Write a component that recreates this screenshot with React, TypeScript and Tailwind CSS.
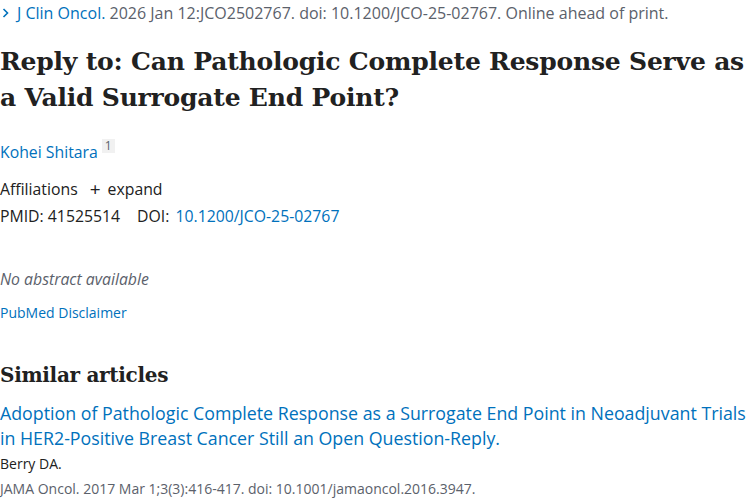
import React from "react";

const sans = "font-['Open_Sans',sans-serif]";
const serif = "font-['DejaVu_Serif',serif]";

export default function App() {
  return (
    <div className={`w-[750px] h-[500px] overflow-hidden bg-white ${sans} text-[#212121]`}>
      <div className="flex items-center h-[26px] text-[16px] text-[#5b616b] whitespace-nowrap">
        <svg width="10" height="12" viewBox="0 0 10 12" className="ml-[1px] mr-[6px]">
          <path d="M2.5 2 L6.5 6 L2.5 10" stroke="#0071bc" strokeWidth="1.6" fill="none" />
        </svg>
        <span className="text-[#0071bc]">J Clin Oncol.</span>
        <span>&nbsp;2026 Jan 12:JCO2502767. doi: 10.1200/JCO-25-02767. Online ahead of print.</span>
      </div>
      <h1 className={`${serif} font-bold text-[25px] leading-[36px] mt-[18px] tracking-[-0.2px]`}>
        Reply to: Can Pathologic Complete Response Serve as a Valid Surrogate End Point?
      </h1>
      <div className="mt-[24px] flex items-center h-[24px] text-[15.8px] leading-[24px]">
        <span className="text-[#0071bc]">Kohei Shitara</span>
        <span className="ml-[4px] self-start mt-[-1px] bg-[#f1f1f1] text-[12px] leading-[14px] px-[3px] text-[#5b616b]">1</span>
      </div>
      <div className="mt-[13px] flex items-center h-[24px] text-[15.8px] leading-[24px]">
        <span>Affiliations</span>
        <span className="ml-[12px] text-[19px] leading-none">+</span>
        <span className="ml-[7px]">expand</span>
      </div>
      <div className="mt-[3px] flex items-center h-[24px] text-[15.8px] leading-[24px] whitespace-nowrap">
        <span>PMID: 41525514</span>
        <span className="ml-[17px]">DOI:</span>
        <span className="ml-[6px] text-[#0071bc]">10.1200/JCO-25-02767</span>
      </div>
      <div className="mt-[39px] h-[24px] leading-[24px] italic text-[15.8px] text-[#5b616b]">No abstract available</div>
      <div className="mt-[12px] h-[20px] leading-[20px] text-[14px] text-[#0071bc]">PubMed Disclaimer</div>
      <h2 className={`${serif} font-bold text-[20px] leading-[30px] mt-[37px] tracking-[-0.3px]`}>Similar articles</h2>
      <div className="mt-[11px] text-[17.8px] leading-[25px] text-[#0071bc]">
        Adoption of Pathologic Complete Response as a Surrogate End Point in Neoadjuvant Trials in HER2-Positive Breast Cancer Still an Open Question-Reply.
      </div>
      <div className="text-[14px] leading-[25px]">Berry DA.</div>
      <div className="text-[14px] leading-[25px] text-[#5b616b] whitespace-nowrap">JAMA Oncol. 2017 Mar 1;3(3):416-417. doi: 10.1001/jamaoncol.2016.3947.</div>
    </div>
  );
}
